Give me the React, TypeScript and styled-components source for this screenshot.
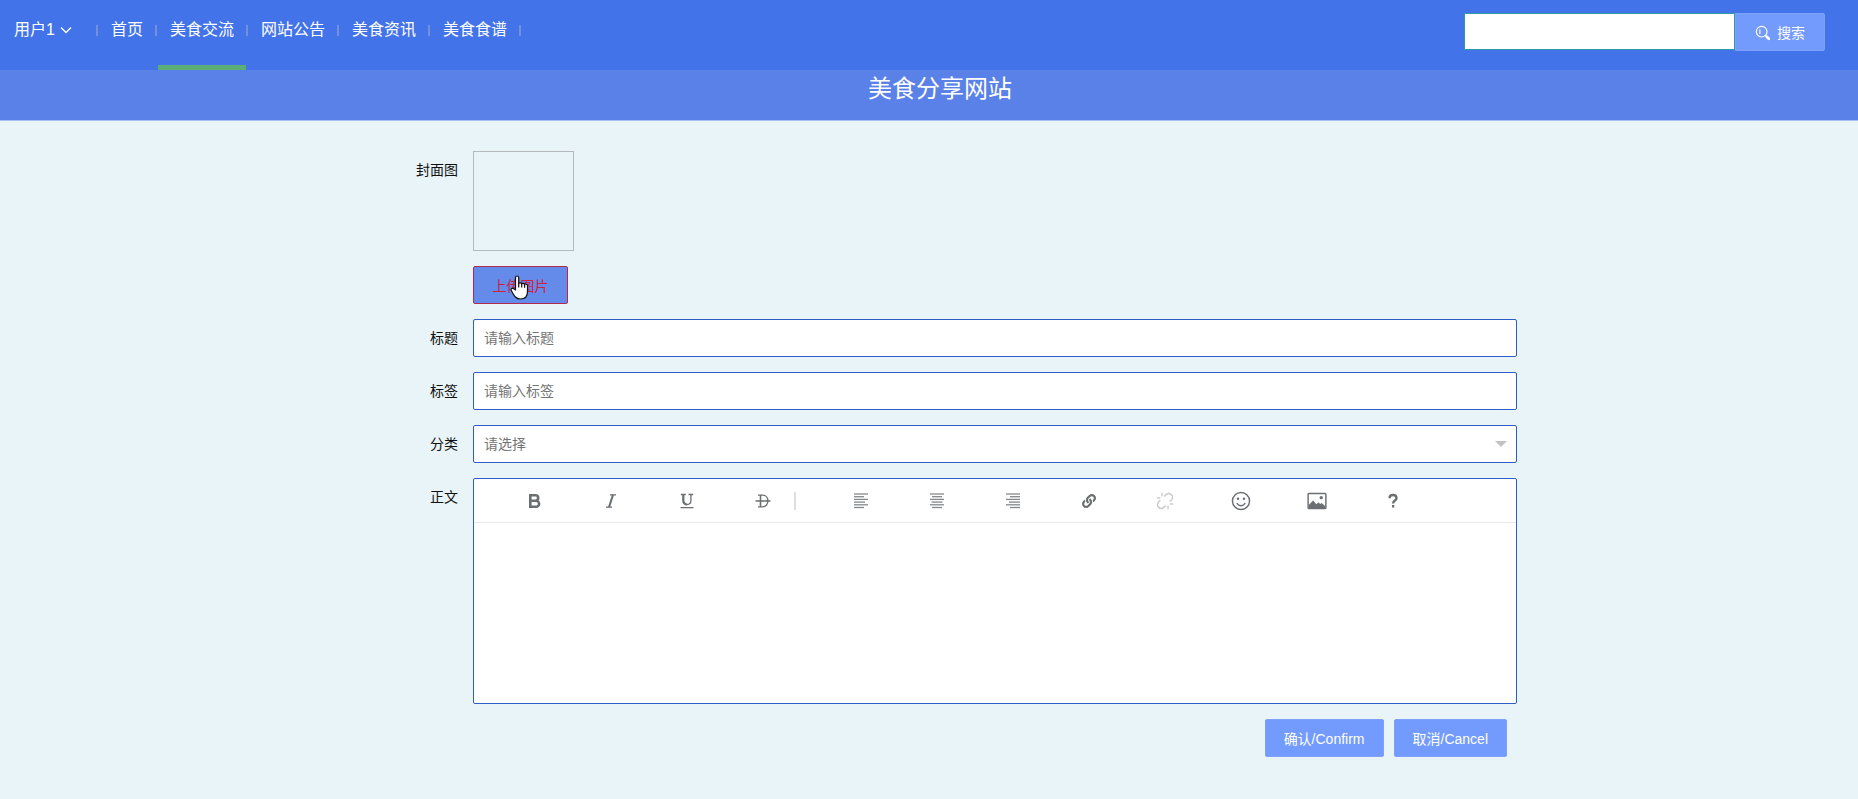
import React from 'react';
import styled, { createGlobalStyle } from 'styled-components';
import { Unlink } from 'lucide-react';
import { FaLink } from 'react-icons/fa';

const GlobalStyle = createGlobalStyle`
  *, *::before, *::after { box-sizing: border-box; }
  body {
    margin: 0;
    min-height: 100vh;
    background: #e8f4f8;
    color: #111;
    font: 14px/20px "Liberation Sans", "Noto Sans CJK SC", sans-serif;
  }
  button, input, select, textarea { font: inherit; color: inherit; }
`;

const Header = styled.header`
  display: flex;
  justify-content: space-between;
  height: 70px;
  padding: 0 33px 0 14px;
  background: #4373e9;
  color: #fff;
`;

const Nav = styled.nav`
  display: flex;
  font-size: 16px;
  line-height: 60px;
`;

const UserMenu = styled.button`
  display: flex;
  align-items: center;
  gap: 5px;
  width: 82px;
  height: 60px;
  padding: 0;
  border: 0;
  background: none;
  cursor: pointer;
`;

const NavItem = styled.div`
  display: flex;
  align-items: flex-start;

  &::before {
    content: "";
    width: 2px;
    height: 11px;
    margin: 25px 1px 0 0;
    background: #7590d8;
  }
`;

const NavLink = styled.a<{ $active?: boolean }>`
  height: 70px;
  padding: 0 12px;
  border-bottom: 5px solid ${(p) => (p.$active ? '#5bae75' : 'transparent')};
  color: #fff;
  text-decoration: none;
`;

const SearchForm = styled.form`
  display: flex;
  align-items: flex-start;
  padding-top: 13px;
`;

const SearchInput = styled.input`
  width: 271px;
  height: 37px;
  padding: 0 10px;
  border: 1px solid #2e9aa8;
  background: #fff;
  color: #333;
  outline: 0;
`;

const Button = styled.button`
  display: inline-flex;
  align-items: center;
  justify-content: center;
  gap: 6px;
  height: 38px;
  padding: 2px 18px 0;
  border: 1px solid #7f9ffb;
  border-radius: 2px;
  background: #739afd;
  color: #fff;
  white-space: nowrap;
  cursor: pointer;
`;

const SearchButton = styled(Button)`
  width: 90px;
  border-radius: 0 2px 2px 0;
`;

const UploadButton = styled(Button)`
  position: relative;
  width: 95px;
  border-color: #b02a50;
  background: #648aea;
  color: #d0203c;
`;

const Pointer = styled.svg`
  position: absolute;
  left: 36px;
  top: 8px;
`;

const Banner = styled.div`
  height: 51px;
  padding-left: 22px;
  border-bottom: 1px solid #a9bff0;
  background: #5a81e8;
`;

const Title = styled.h1`
  margin: 0;
  color: #fff;
  font-size: 24px;
  font-weight: 400;
  line-height: 38px;
  text-align: center;
`;

const Page = styled.main`
  padding: 30px 0 40px 22px;
`;

const Form = styled.form`
  display: flex;
  flex-direction: column;
  gap: 15px;
  max-width: 1154px;
  margin: 0 auto;
`;

const Row = styled.div`
  display: grid;
  grid-template-columns: 110px 1fr;
  align-items: start;
`;

const Label = styled.label`
  padding: 9px 15px 9px 0;
  text-align: right;
`;

const Field = styled.div`
  position: relative;
  grid-column: 2;
  display: flex;
`;

const Cover = styled.div`
  width: 101px;
  height: 100px;
  border: 1px solid #b4b9bb;
`;

const TextInput = styled.input`
  width: 100%;
  height: 38px;
  padding: 0 10px;
  border: 1px solid #2f5fc6;
  border-radius: 2px;
  background: #fff;
  outline: 0;

  &::placeholder { color: #757575; opacity: 1; }
`;

const Select = styled.select`
  width: 100%;
  height: 38px;
  padding: 0 10px;
  border: 1px solid #2f5fc6;
  border-radius: 2px;
  appearance: none;
  background: #fff;
  color: #757575;
  outline: 0;
`;

const Caret = styled.span`
  position: absolute;
  right: 10px;
  top: 16px;
  border: 6px solid transparent;
  border-top-color: #c2c2c2;
  border-bottom: 0;
  pointer-events: none;
`;

const Editor = styled.div`
  flex: 1;
  border: 1px solid #2f5fc6;
  border-radius: 2px;
  background: #fff;
`;

const Toolbar = styled.div`
  display: flex;
  align-items: center;
  height: 44px;
  padding-left: 45px;
  border-bottom: 1px solid #e8e8e8;
`;

const ToolGroup = styled.div<{ $divided?: boolean }>`
  display: flex;
  align-items: center;
  gap: 44px;
  height: 18px;
  ${(p) => p.$divided && 'padding-right: 15px; margin-right: 49px; border-right: 2px solid #dedede;'}
`;

const Tool = styled.button`
  display: grid;
  place-items: center;
  width: 32px;
  height: 32px;
  padding: 0;
  border: 0;
  background: none;
  color: #6b6f73;
  cursor: pointer;

  &:disabled { color: #cccccc; }
`;

const EditorBody = styled.textarea`
  display: block;
  width: 100%;
  height: 180px;
  padding: 10px;
  border: 0;
  background: none;
  resize: none;
  outline: 0;
`;

const Actions = styled.div`
  display: flex;
  justify-content: flex-end;
  gap: 10px;
  padding-right: 10px;
`;

const Icon = ({ children, size = 18 }: { children: React.ReactNode; size?: number }) => (
  <svg width={size} height={size} viewBox="0 0 18 18" fill="none" stroke="currentColor" strokeWidth="1.3" aria-hidden="true">
    {children}
  </svg>
);

const lines = (starts: number[]) => (
  <Icon>
    {starts.map((x, i) => {
      const width = [14, 10, 14, 11, 14, 10][i];
      return <path key={i} stroke="#85888b" d={`M${x} ${2 + i * 2.7}h${width}`} />;
    })}
  </Icon>
);

const formatTools = [
  { name: '加粗', icon: <Icon><path strokeWidth="2.6" d="M4.3 3.3h5.2a2.7 2.7 0 0 1 0 5.4H4.3zM4.3 8.7h5.8a3 3 0 0 1 0 6H4.3z" /></Icon> },
  { name: '斜体', icon: <Icon><path d="M8 2.9h6M4 15.1h6" /><path strokeWidth="2" d="M11 2.9L7 15.1" /></Icon> },
  { name: '下划线', icon: <Icon><path d="M2.8 2.5h5M10.5 2.5h4.7M2.5 15.6h13" /><path strokeWidth="2.2" d="M5.300 2.5v6a3.700 3.700 0 0 0 3.700 4" /><path d="M9 12.500c2.700 0 3.900-1.500 3.900-4v-6" /></Icon> },
  { name: '删除线', icon: <Icon><path d="M4 3.200h4.500c7.200 0 7.200 11.600 0 11.600H4M1.500 9h15" /><path strokeWidth="1.600" d="M6.500 3v12" /></Icon> },
];

const insertTools = [
  { name: '左对齐', icon: lines([2, 2, 2, 2, 2, 2]) },
  { name: '居中对齐', icon: lines([2, 4, 2, 3.5, 2, 4]) },
  { name: '右对齐', icon: lines([2, 6, 2, 5, 2, 6]) },
  { name: '插入链接', icon: <FaLink size={14} /> },
  { name: '清除链接', disabled: true, icon: <Unlink size={18} strokeWidth={2} /> },
  { name: '表情', icon: <Icon size={20}><circle cx="9" cy="9" r="7.700" /><path d="M5.300 10.800c1.500 3.200 5.900 3.200 7.400 0" /><g fill="currentColor" stroke="none"><circle cx="6.300" cy="7" r="1.100" /><circle cx="11.700" cy="7" r="1.100" /></g></Icon> },
  { name: '图片', icon: <Icon size={20}><rect x="1" y="2.200" width="16" height="13.600" rx=".8" /><path fill="currentColor" stroke="none" d="M1.500 15.500v-3L5.500 8.500l3 3.500 1.800-1.800 1.500 1.500 1.400-1 3.300 3v1.800z" /><circle cx="12.800" cy="6" r="1.500" fill="currentColor" stroke="none" /></Icon> },
  { name: '帮助', icon: <Icon><path strokeWidth="2.300" d="M5.500 6.200c0-4.300 7-4.300 7 0 0 2.300-3.400 2.400-3.400 5.200M9.100 13v2.500" /></Icon> },
];

type ToolSpec = { name: string; icon: React.ReactNode; disabled?: boolean };

const Tools = ({ items }: { items: ToolSpec[] }) => (
  <>
    {items.map((t) => (
      <Tool key={t.name} type="button" aria-label={t.name} disabled={t.disabled}>{t.icon}</Tool>
    ))}
  </>
);

const navItems = ['首页', '美食交流', '网站公告', '美食资讯', '美食食谱'];

export default function App() {
  return (
    <>
      <GlobalStyle />
      <Header>
        <Nav>
          <UserMenu type="button">
            用户1
            <svg width="12" height="8" viewBox="0 0 12 8" fill="none" stroke="currentColor" strokeWidth="1.300" aria-hidden="true">
              <path d="M1 1.500l5 5 5-5" />
            </svg>
          </UserMenu>
          {navItems.map((n) => (
            <NavItem key={n}>
              <NavLink href="#" $active={n === '美食交流'}>{n}</NavLink>
            </NavItem>
          ))}
          <NavItem />
        </Nav>
        <SearchForm>
          <SearchInput type="text" aria-label="搜索" />
          <SearchButton type="button">
            <Icon size={16}>
              <circle cx="7.500" cy="7.500" r="6" />
              <path d="M5.500 5v5" />
              <path strokeWidth="3" strokeLinecap="round" d="M13 13l2.500 2.500" />
            </Icon>
            搜索
          </SearchButton>
        </SearchForm>
      </Header>
      <Banner><Title>美食分享网站</Title></Banner>
      <Page>
        <Form>
          <Row>
            <Label htmlFor="upload">封面图</Label>
            <Field><Cover /></Field>
          </Row>
          <Row>
            <Field>
              <UploadButton id="upload" type="button">
                上传图片
                <Pointer width="20" height="26" viewBox="0 0 20 26" fill="#fff" stroke="#111" strokeWidth="1.200" strokeLinejoin="round" aria-hidden="true">
                  <path d="M5.500 15V2.800c0-2.400 3.200-2.400 3.200 0V9c0-1.700 3-1.500 3 .3 0-1.500 2.900-1.300 2.900.5 0-1.300 2.900-1 2.900.8v6c0 4-2 7.400-7 7.400-4.500 0-6-2.500-9.200-8.500-.9-1.700 1.300-2.800 2.500-1.700z" />
                  <path fill="none" d="M8.700 8.500v4M11.700 9v3.500M14.600 9.700v3" />
                </Pointer>
              </UploadButton>
            </Field>
          </Row>
          <Row>
            <Label htmlFor="title">标题</Label>
            <Field><TextInput id="title" type="text" placeholder="请输入标题" /></Field>
          </Row>
          <Row>
            <Label htmlFor="tag">标签</Label>
            <Field><TextInput id="tag" type="text" placeholder="请输入标签" /></Field>
          </Row>
          <Row>
            <Label htmlFor="category">分类</Label>
            <Field>
              <Select id="category"><option>请选择</option></Select>
              <Caret />
            </Field>
          </Row>
          <Row>
            <Label htmlFor="body">正文</Label>
            <Field>
              <Editor>
                <Toolbar>
                  <ToolGroup $divided><Tools items={formatTools} /></ToolGroup>
                  <ToolGroup><Tools items={insertTools} /></ToolGroup>
                </Toolbar>
                <EditorBody id="body" />
              </Editor>
            </Field>
          </Row>
          <Actions>
            <Button type="button">确认/Confirm</Button>
            <Button type="button">取消/Cancel</Button>
          </Actions>
        </Form>
      </Page>
    </>
  );
}
